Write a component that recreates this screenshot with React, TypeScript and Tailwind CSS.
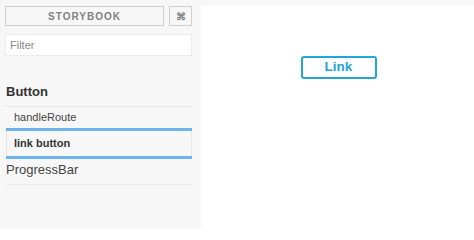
export default function App() {
  return (
    <div className="flex h-[229px] w-[474px] bg-[#f7f7f7] pt-[6px] font-['Liberation_Sans',Arial,sans-serif]">
      {/* Sidebar */}
      <div className="flex w-[201px] flex-col pl-[5px] pr-[9px]">
        <div className="flex h-[20px] gap-[5px]">
          <button className="flex flex-1 items-center justify-center border border-[#cfcfcf] bg-[#f7f7f7] text-[10px] font-bold tracking-[1px] text-[#828282]">
            STORYBOOK
          </button>
          <button className="flex w-[23px] items-center justify-center border border-[#cfcfcf] bg-[#f7f7f7] text-[10px] font-bold text-[#828282]">
            ⌘
          </button>
        </div>
        <div className="mt-[8px] flex h-[22px] items-center border border-[#ececec] bg-white px-[4px] text-[11px] text-[#8a8a8a]">
          Filter
        </div>

        <div className="ml-[1px] mt-[28px] border-b border-[#e8e8e8] pb-[6px] text-[13px] font-bold leading-[16px] text-[#333]">
          Button
        </div>
        <div className="ml-[1px] flex h-[21px] items-center pl-[8px] text-[11px] text-[#444]">
          handleRoute
        </div>
        <div className="ml-[1px] flex h-[31px] items-center border-y-[3px] border-[#6db4ec] bg-[#f7f7f7] pl-[8px] text-[11px] font-bold text-[#333] shadow-[inset_1px_0_0_#e6e6e6,inset_-1px_0_0_#e6e6e6]">
          link button
        </div>
        <div className="ml-[1px] h-[26px] border-b border-[#ececec] pt-[3px] text-[13px] leading-[15px] text-[#444]">
          ProgressBar
        </div>
      </div>

      {/* Preview */}
      <div className="flex flex-1 justify-center bg-white pl-[2px] pt-[50px]">
        <button className="flex h-[23px] w-[76px] items-center justify-center rounded-[3px] border-2 border-[#22a6d7] text-[13.5px] font-bold text-[#1fa3d5]">
          Link
        </button>
      </div>
    </div>
  );
}
